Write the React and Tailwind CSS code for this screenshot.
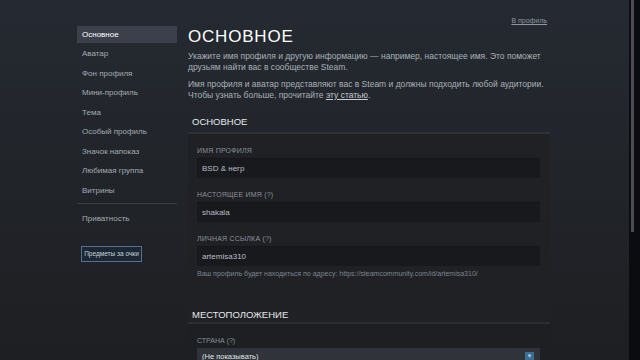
import React from 'react';

const navItems = [
  'Основное',
  'Аватар',
  'Фон профиля',
  'Мини-профиль',
  'Тема',
  'Особый профиль',
  'Значок напоказ',
  'Любимая группа',
  'Витрины',
];

const Field = ({ label, value, hint }) => (
  <div className="px-[9px] pr-[10px]">
    <div className="text-[7px] uppercase leading-[9px] text-[#8b929a] tracking-[0.2px] mb-[3px]">{label}</div>
    <div className="h-[20px] bg-[#18191d] border-t border-[#141518] flex items-center pl-[5px] text-[8px] text-[#b8bec4]">
      {value}
    </div>
    {hint && <div className="mt-[3px] text-[7px] leading-[9px] text-[#7d858d]">{hint}</div>}
  </div>
);

const App = () => {
  return (
    <div
      className="w-[640px] h-[360px] overflow-hidden flex bg-gradient-to-b from-[#252a32] via-[#212429] to-[#1e1f23]"
      style={{ fontFamily: '"Liberation Sans", Arial, sans-serif' }}
    >
      {/* Sidebar */}
      <div className="ml-[77px] w-[100px] pt-[26px] shrink-0">
        {navItems.map((item, i) => (
          <div
            key={item}
            className={
              i === 0
                ? 'h-[17px] mb-[2.5px] pl-[5px] flex items-center text-[8px] text-white bg-[#3b404a]'
                : 'h-[17px] mb-[2.5px] pl-[5px] flex items-center text-[8px] text-[#a3abb3]'
            }
          >
            {item}
          </div>
        ))}
        <div className="mt-[4px] h-px bg-[#393c43]" />
        <div className="h-[17px] mt-[6px] pl-[5px] flex items-center text-[8px] text-[#a3abb3]">Приватность</div>
        <div className="mt-[19px] ml-[4px] w-[61px] h-[16px] border border-[#52708f] bg-[#1d2633] flex items-center justify-center text-[6.5px] text-[#c6d4df]">
          Предметы за очки
        </div>
      </div>

      {/* Main */}
      <div className="ml-[11px] w-[362px] shrink-0 relative">
        <div className="absolute right-[3px] top-[16px] text-[7px] text-[#8f98a0] underline">В профиль</div>
        <div className="pt-[27px] text-[17px] leading-[19px] tracking-[0.8px] text-white">ОСНОВНОЕ</div>
        <div className="mt-[5px] text-[8.5px] leading-[11px] text-[#a9b1b8]">
          Укажите имя профиля и другую информацию — например, настоящее имя. Это поможет
          <br />
          друзьям найти вас в сообществе Steam.
        </div>
        <div className="mt-[6px] text-[8.5px] leading-[11px] text-[#a9b1b8]">
          Имя профиля и аватар представляют вас в Steam и должны подходить любой аудитории.
          <br />
          Чтобы узнать больше, прочитайте <span className="underline text-[#c6ccd2]">эту статью</span>.
        </div>

        <div className="mt-[12px] h-[21px] flex items-center pl-[4px] text-[9.5px] text-[#e6e9ec] border-b-2 border-[#2e3137]">
          ОСНОВНОЕ
        </div>

        <div className="bg-[#1f2125] pt-[12px] pb-[26px] flex flex-col gap-[12px]">
          <Field label="Имя профиля" value="BSD & негр" />
          <Field label="Настоящее имя (?)" value="shakala" />
          <Field
            label="Личная ссылка (?)"
            value="artemisa310"
            hint="Ваш профиль будет находиться по адресу: https://steamcommunity.com/id/artemisa310/"
          />
        </div>

        <div className="bg-[#1f2125] pt-[5px] h-[20px] flex items-center pl-[4px] text-[9.5px] text-[#e6e9ec] border-b-2 border-[#2b2e33]">
          МЕСТОПОЛОЖЕНИЕ
        </div>
        <div className="bg-[#1d1f23] pt-[12px] px-[9px] pr-[10px]">
          <div className="text-[7px] uppercase leading-[9px] text-[#8b929a] mb-[3px]">Страна (?)</div>
          <div className="h-[20px] bg-[#30333a] flex items-start justify-between pt-[4px] pl-[5px] pr-[6px] text-[7.5px] leading-[9px] text-[#dfe3e6]">
            <span>(Не показывать)</span>
            <span className="w-[9px] h-[8px] bg-[#3d6c8f] text-[#9fd3ff] text-[6px] flex items-center justify-center">▼</span>
          </div>
        </div>
      </div>

      <div className="flex-1" />

      {/* Scrollbar */}
      <div className="w-[11px] shrink-0 bg-[#0b0c0f] pl-[2px]">
        <div className="w-[3px] h-[232px] bg-[#4a4d53]" />
      </div>
    </div>
  );
};

export default App;
